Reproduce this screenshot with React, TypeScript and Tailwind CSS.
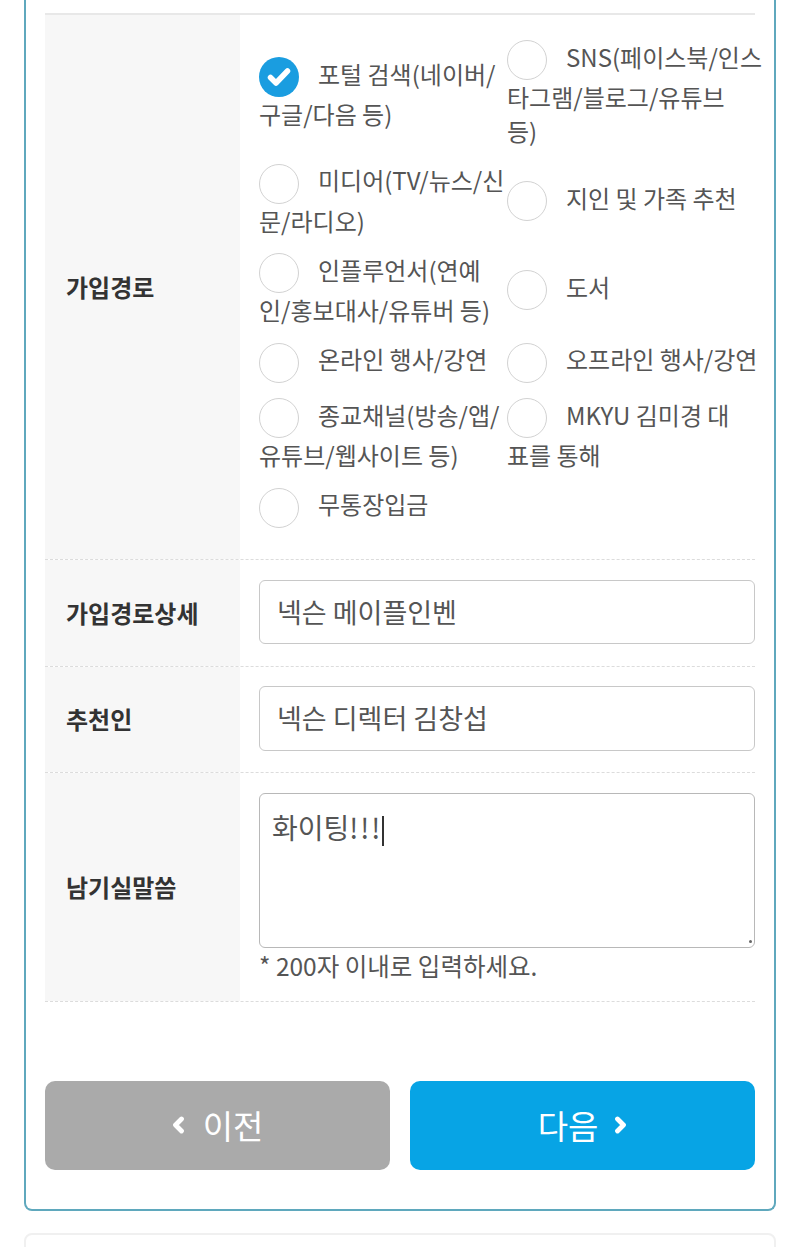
import React from "react";

const options: { lines: string[]; checked?: boolean }[] = [
  { lines: ["포털 검색(네이버/", "구글/다음 등)"], checked: true },
  { lines: ["SNS(페이스북/인스", "타그램/블로그/유튜브", "등)"] },
  { lines: ["미디어(TV/뉴스/신", "문/라디오)"] },
  { lines: ["지인 및 가족 추천"] },
  { lines: ["인플루언서(연예", "인/홍보대사/유튜버 등)"] },
  { lines: ["도서"] },
  { lines: ["온라인 행사/강연"] },
  { lines: ["오프라인 행사/강연"] },
  { lines: ["종교채널(방송/앱/", "유튜브/웹사이트 등)"] },
  { lines: ["MKYU 김미경 대", "표를 통해"] },
  { lines: ["무통장입금"] },
];

function Radio({ checked }: { checked?: boolean }) {
  if (checked) {
    return (
      <span className="inline-flex w-10 h-10 rounded-full bg-[#1a9de0] align-middle mr-[19px] items-center justify-center">
        <svg width="24" height="20" viewBox="0 0 24 20">
          <path d="M3.5 10.5 L9 16 L20.5 4" fill="none" stroke="#fff" strokeWidth="5.5" strokeLinecap="round" strokeLinejoin="round" />
        </svg>
      </span>
    );
  }
  return (
    <span className="inline-block w-10 h-10 rounded-full border-[1.5px] border-[#d2d2d2] bg-white align-middle mr-[19px]" />
  );
}

function Label({ children }: { children: React.ReactNode }) {
  return (
    <div className="w-[195px] shrink-0 bg-[#f7f7f7] flex items-center pl-[21px] text-[24px] font-bold text-[#333]">
      {children}
    </div>
  );
}

export default function App() {
  return (
    <div
      className="min-h-[1247px] bg-white overflow-hidden"
      style={{ fontFamily: '"Noto Sans CJK KR", "Noto Sans", sans-serif' }}
    >
      <div className="mx-[24px] border-x-2 border-b-2 border-[#5fa8bd] rounded-b-lg px-[19px] pt-[13px] pb-[39px]">
        <div className="border-t-2 border-[#e8e8e8]">
          {/* 가입경로 */}
          <div className="flex">
            <Label>가입경로</Label>
            <div className="flex-1 pl-[19px] pt-[25px] pb-[16px]">
              {options.map((o) => (
                <div
                  key={o.lines[0]}
                  className="inline-block w-1/2 align-middle mb-[15px] whitespace-nowrap text-[24px] leading-[34px] text-[#555]"
                >
                  <Radio checked={o.checked} />
                  {o.lines.map((l, i) => (
                    <React.Fragment key={l}>
                      {i > 0 && <br />}
                      {l}
                    </React.Fragment>
                  ))}
                </div>
              ))}
            </div>
          </div>

          {/* 가입경로상세 */}
          <div className="flex border-t border-dashed border-[#dcdcdc]">
            <Label>가입경로상세</Label>
            <div className="flex-1 pl-[19px] pt-[20px] pb-[22px]">
              <div className="h-[64px] border-[1.5px] border-[#c8c8c8] rounded-md flex items-center pl-[17px] text-[27px] text-[#555]">
                넥슨 메이플인벤
              </div>
            </div>
          </div>

          {/* 추천인 */}
          <div className="flex border-t border-dashed border-[#dcdcdc]">
            <Label>추천인</Label>
            <div className="flex-1 pl-[19px] pt-[19px] pb-[21px]">
              <div className="h-[65px] border-[1.5px] border-[#c8c8c8] rounded-md flex items-center pl-[17px] text-[27px] text-[#555]">
                넥슨 디렉터 김창섭
              </div>
            </div>
          </div>

          {/* 남기실말씀 */}
          <div className="flex border-y border-dashed border-[#dcdcdc]">
            <Label>남기실말씀</Label>
            <div className="flex-1 pl-[19px] pt-[20px] pb-[20px]">
              <div className="relative h-[155px] border-[1.5px] border-[#b8b8b8] rounded-md pl-[12px] pt-[14px] text-[28px] leading-[38px] text-[#555]">
                화이팅<span className="tracking-[2px]">!!!</span>
                <span className="inline-block w-[1.5px] h-[30px] bg-[#333] align-middle" />
                <span className="absolute right-[2px] bottom-[4px] w-[3px] h-[3px] rounded-full bg-[#666]" />
              </div>
              <p className="mt-[3px] text-[24.5px] leading-[30px] text-[#555]">* 200자 이내로 입력하세요.</p>
            </div>
          </div>
        </div>

        {/* buttons */}
        <div className="flex gap-5 mt-[79px]">
          <button className="flex-1 h-[89px] rounded-[10px] bg-[#aaaaaa] text-white text-[33px] flex items-center justify-center gap-[18px]">
            <svg width="13" height="18" viewBox="0 0 13 18">
              <path d="M9.5 3 L3.5 9 L9.5 15" fill="none" stroke="#fff" strokeWidth="4.8" strokeLinecap="round" strokeLinejoin="round" />
            </svg>
            이전
          </button>
          <button className="flex-1 h-[89px] rounded-[10px] bg-[#07a4e5] text-white text-[33px] flex items-center justify-center gap-[16px]">
            다음
            <svg width="13" height="18" viewBox="0 0 13 18">
              <path d="M3.5 3 L9.5 9 L3.5 15" fill="none" stroke="#fff" strokeWidth="4.8" strokeLinecap="round" strokeLinejoin="round" />
            </svg>
          </button>
        </div>
      </div>

      <div className="mx-[24px] mt-[22px] h-[60px] border-2 border-[#f0f0f0] rounded-t-lg" />
    </div>
  );
}
